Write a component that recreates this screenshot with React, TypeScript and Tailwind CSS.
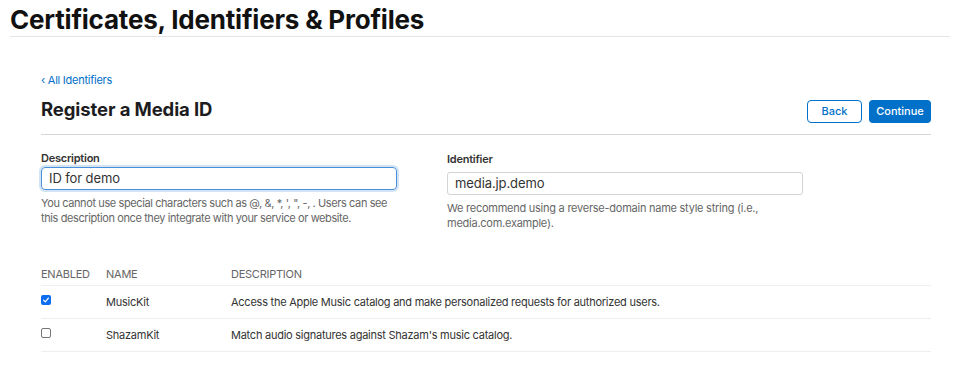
import React from 'react';

interface Capability {
  name: string;
  description: string;
  enabled: boolean;
}

const capabilities: Capability[] = [
  {
    name: 'MusicKit',
    description: 'Access the Apple Music catalog and make personalized requests for authorized users.',
    enabled: true,
  },
  {
    name: 'ShazamKit',
    description: "Match audio signatures against Shazam's music catalog.",
    enabled: false,
  },
];

function Checkbox({ checked }: { checked: boolean }) {
  if (checked) {
    return (
      <span className="flex h-[10px] w-[10px] items-center justify-center rounded-[2px] bg-[#0a6cf0]">
        <svg viewBox="0 0 10 10" className="h-[8px] w-[8px]">
          <path d="M2 5.2 L4.1 7.3 L8 2.6" fill="none" stroke="white" strokeWidth="1.6" strokeLinecap="round" strokeLinejoin="round" />
        </svg>
      </span>
    );
  }
  return <span className="block h-[10px] w-[10px] rounded-[2px] border border-[#767676] bg-white" />;
}

export default function App() {
  return (
    <div className="min-h-[391px] bg-white font-['Inter','Liberation_Sans',sans-serif] text-[#333]">
      <div className="px-[10px]">
        <h1 className="border-b border-[#e5e5e5] pt-[6px] pb-[2px] text-[26px] leading-[28px] font-bold tracking-[-0.2px] text-[#111]">
          Certificates, Identifiers &amp; Profiles
        </h1>
      </div>

      <div className="ml-[41px] mr-[29px] tracking-[-0.25px]">
        <a className="mt-[36px] block text-[11px] leading-[14px] text-[#0070c9]">‹ All Identifiers</a>

        <div className="mt-[11px] flex items-start justify-between border-b border-[#d6d6d6] pb-[11px]">
          <h2 className="text-[18.5px] leading-[22px] font-bold tracking-[-0.1px] text-[#1d1d1f]">Register a Media ID</h2>
          <div className="flex gap-[7px] pt-[2px] tracking-normal">
            <button className="h-[23px] w-[55px] rounded-[4px] border border-[#0070c9] bg-white text-[11px] font-medium text-[#0070c9]">
              Back
            </button>
            <button className="h-[23px] w-[62px] rounded-[4px] bg-[#0070c9] text-[11px] font-medium text-white">
              Continue
            </button>
          </div>
        </div>

        <div className="mt-[16px] grid grid-cols-[356px_356px] gap-x-[50px]">
          <div>
            <label className="block text-[11px] leading-[14px] font-semibold text-[#333]">Description</label>
            <div className="mt-[2px] flex h-[23px] items-center rounded-[4px] border border-[#4a90d9] px-[7px] text-[13px] tracking-[-0.1px] text-[#333] shadow-[0_0_0_2px_rgba(74,144,217,0.25)]">
              ID for demo
            </div>
            <p className="mt-[6px] whitespace-nowrap text-[11px] leading-[15px] tracking-[-0.4px] text-[#666]">
              You cannot use special characters such as @, &amp;, *, ', ", -, . Users can see
              <br />
              this description once they integrate with your service or website.
            </p>
          </div>
          <div>
            <label className="block pt-[1px] text-[11px] leading-[14px] font-semibold text-[#333]">Identifier</label>
            <div className="mt-[6px] flex h-[23px] items-center rounded-[3px] border border-[#d2d2d7] px-[7px] text-[13px] tracking-[-0.1px] text-[#333]">
              media.jp.demo
            </div>
            <p className="mt-[6px] w-[330px] text-[11px] leading-[15px] text-[#666]">
              We recommend using a reverse-domain name style string (i.e., media.com.example).
            </p>
          </div>
        </div>

        <div className="mt-[32px] text-[11px]">
          <div className="grid h-[23px] grid-cols-[65px_125px_1fr] items-center border-b border-[#eee] text-[#666] uppercase">
            <span>Enabled</span>
            <span>Name</span>
            <span>Description</span>
          </div>
          {capabilities.map((cap) => (
            <div
              key={cap.name}
              className="grid h-[33px] grid-cols-[65px_125px_1fr] items-center border-b border-[#eee] text-[#333]"
            >
              <span className="-mt-[4px]">
                <Checkbox checked={cap.enabled} />
              </span>
              <span>{cap.name}</span>
              <span>{cap.description}</span>
            </div>
          ))}
        </div>
      </div>
    </div>
  );
}
